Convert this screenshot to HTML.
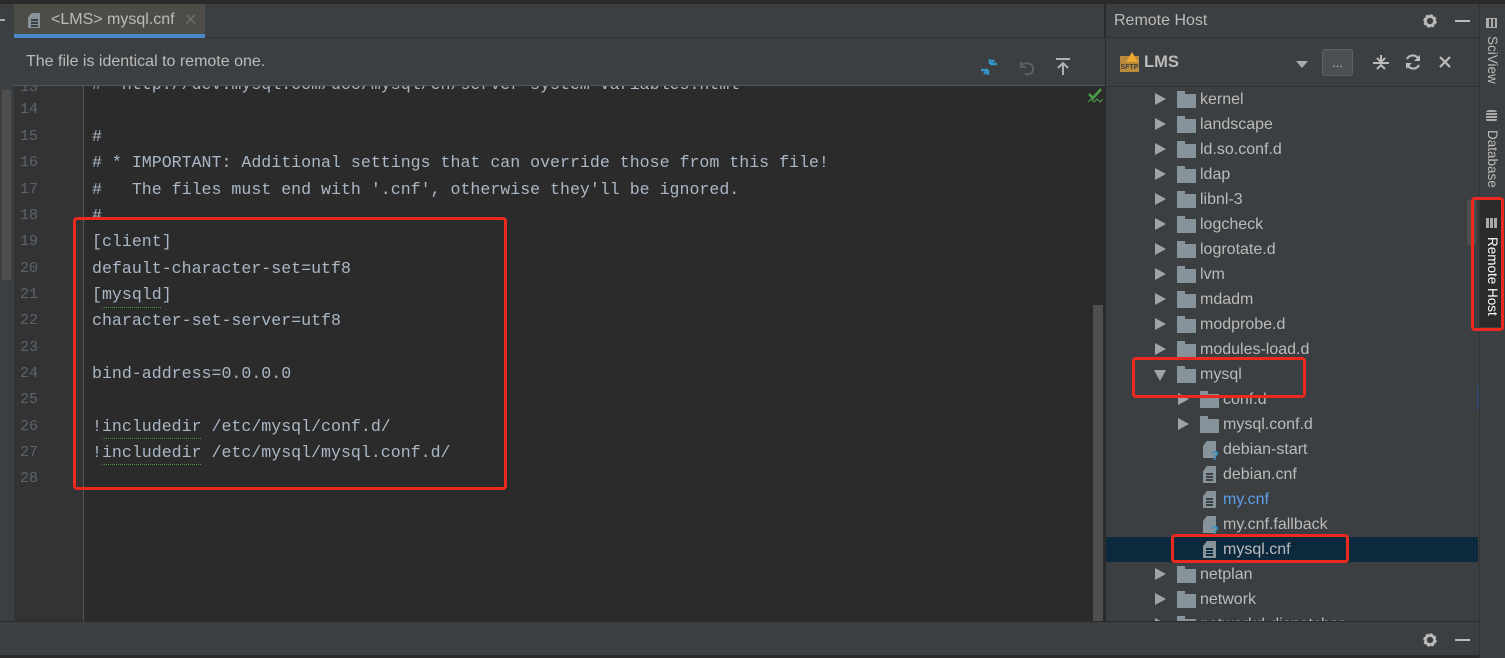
<!DOCTYPE html>
<html><head><meta charset="utf-8"><style>
*{margin:0;padding:0;box-sizing:border-box}
body{width:1505px;height:658px;overflow:hidden;background:#3c3f41;position:relative;font-family:"Liberation Sans",sans-serif;color:#bbbbbb}
.a{position:absolute}
.mono{font-family:"Liberation Mono",monospace;font-size:16.6px;color:#a9b7c6;white-space:pre}
.ln{font-family:"Liberation Mono",monospace;font-size:15px;color:#606366;position:absolute;left:20px;width:24px;text-align:left}
.row{position:absolute;font-size:16px;color:#bbbbbb;white-space:nowrap}
.red{position:absolute;border:3px solid #ea2a1f;border-radius:4px}
.arr{position:absolute;width:0;height:0;border-left:11px solid #a0a4a8;border-top:6.5px solid transparent;border-bottom:6.5px solid transparent}
.fold{position:absolute;width:19px;height:14px;background:#87939a}
.fold:before{content:"";position:absolute;left:0;top:-3px;width:8px;height:3px;background:#87939a}
.file{position:absolute;width:13px;height:17px;background:#87939a;clip-path:polygon(30% 0,100% 0,100% 100%,0 100%,0 30%)}
.file i{position:absolute;left:3px;height:1.5px;background:#3c3f41;width:7px}
.q{position:absolute;color:#3592c4;font-weight:bold;font-size:13px}
</style></head><body>
<div class="a" style="left:0;top:0;width:1505px;height:4px;background:#2b2b2b"></div>
<div class="a" style="left:0;top:4px;width:14px;height:618px;background:#3c3f41"></div>
<div class="a" style="left:0;top:19px;width:5px;height:2px;background:#aaa"></div>
<div class="a" style="left:2px;top:90px;width:9px;height:190px;background:#4e4e4e"></div>
<div class="a" style="left:14px;top:4px;width:1091px;height:34px;background:#3c3f41;border-bottom:1px solid #323232"></div>
<div class="a" style="left:14px;top:4px;width:191px;height:34px;background:#4e4c46"></div>
<div class="a" style="left:14px;top:34px;width:191px;height:4px;background:#4a88c7"></div>
<div class="file" style="left:28px;top:13px;width:12px;height:15px;"><i style="top:6px"></i><i style="top:9px"></i><i style="top:12px"></i></div>
<div class="a" style="left:51px;top:11px;font-size:16px;color:#bbbbbb">&lt;LMS&gt; mysql.cnf</div>
<div class="a" style="left:184px;top:10px;font-size:16px;color:#6d6d6d">✕</div>
<div class="a" style="left:14px;top:86px;width:1091px;height:536px;background:#2b2b2b"></div>
<div class="a" style="left:14px;top:86px;width:69px;height:536px;background:#313335"></div>
<div class="a" style="left:83px;top:86px;width:1px;height:536px;background:#555"></div>
<div class="a" style="left:1093px;top:305px;width:10px;height:316px;background:#4f4f4f"></div>
<div class="a" style="left:1104px;top:4px;width:2px;height:618px;background:#2b2b2b"></div>
<div class="ln" style="top:79px">13</div>
<div class="mono a" style="left:92px;top:75px">#  http://dev.mysql.com/doc/mysql/en/server-system-variables.html</div>
<div class="ln" style="top:101px">14</div>
<div class="ln" style="top:128px">15</div><div class="mono a" style="left:92px;top:127px">#</div>
<div class="ln" style="top:154px">16</div><div class="mono a" style="left:92px;top:153px"># * IMPORTANT: Additional settings that can override those from this file!</div>
<div class="ln" style="top:181px">17</div><div class="mono a" style="left:92px;top:180px">#   The files must end with '.cnf', otherwise they'll be ignored.</div>
<div class="ln" style="top:207px">18</div><div class="mono a" style="left:92px;top:206px">#</div>
<div class="ln" style="top:233px">19</div><div class="mono a" style="left:92px;top:232px">[client]</div>
<div class="ln" style="top:260px">20</div><div class="mono a" style="left:92px;top:259px">default-character-set=utf8</div>
<div class="ln" style="top:286px">21</div><div class="mono a" style="left:92px;top:285px">[mysqld]</div>
<div class="ln" style="top:312px">22</div><div class="mono a" style="left:92px;top:311px">character-set-server=utf8</div>
<div class="ln" style="top:339px">23</div>
<div class="ln" style="top:365px">24</div><div class="mono a" style="left:92px;top:364px">bind-address=0.0.0.0</div>
<div class="ln" style="top:391px">25</div>
<div class="ln" style="top:418px">26</div><div class="mono a" style="left:92px;top:417px">!includedir /etc/mysql/conf.d/</div>
<div class="ln" style="top:444px">27</div><div class="mono a" style="left:92px;top:443px">!includedir /etc/mysql/mysql.conf.d/</div>
<div class="ln" style="top:470px">28</div>
<div class="a" style="left:102px;top:307px;width:59px;border-bottom:1px dotted #5a8f4a"></div>
<div class="a" style="left:102px;top:438px;width:99px;border-bottom:1px dotted #5a8f4a"></div>
<div class="a" style="left:102px;top:464px;width:99px;border-bottom:1px dotted #5a8f4a"></div>
<div class="a" style="left:14px;top:38px;width:1091px;height:48px;background:#3c3f41;border-bottom:1px solid #555"></div>
<div class="a" style="left:26px;top:53px;font-size:16px;color:#bbbbbb">The file is identical to remote one.</div>
<svg class="a" style="left:978px;top:56px" width="22" height="22" viewBox="0 0 22 22"><path d="M12 8h7M12 8l4-4M12 8V3" stroke="#3592c4" stroke-width="2.5" fill="none"/><path d="M10 14H3M10 14l-4 4M10 14v5" stroke="#3592c4" stroke-width="2.5" fill="none"/></svg>
<svg class="a" style="left:1017px;top:57px" width="20" height="20" viewBox="0 0 20 20"><path d="M4 5v5h5M4 9c2-4 11-4 12 2s-5 7-8 6" stroke="#5e6060" stroke-width="2" fill="none"/></svg>
<svg class="a" style="left:1053px;top:57px" width="20" height="20" viewBox="0 0 20 20"><path d="M3 2h14M10 18V6M5 11l5-5 5 5" stroke="#aeb1b3" stroke-width="2" fill="none"/></svg>
<svg class="a" style="left:1087px;top:88px" width="17" height="16" viewBox="0 0 17 16"><path d="M2 6l4 4 8-9" stroke="#4a9e4a" stroke-width="2.5" fill="none"/><path d="M1 14l3-3 3 3 3-3 3 3 3-3" stroke="#4a9e4a" stroke-width="1" fill="none"/></svg>
<div class="a" style="left:1106px;top:4px;width:373px;height:618px;background:#3c3f41"></div>
<div class="a" style="left:1114px;top:12px;font-size:16px;color:#bbbbbb">Remote Host</div>
<svg class="a" style="left:1421px;top:12px" width="18" height="18" viewBox="0 0 18 18"><circle cx="9" cy="9" r="5" fill="none" stroke="#bbb" stroke-width="3.5" stroke-dasharray="2.6 1.3"/><circle cx="9" cy="9" r="4.5" fill="none" stroke="#bbb" stroke-width="2.5"/></svg>
<div class="a" style="left:1455px;top:20px;width:15px;height:2px;background:#bbb"></div>
<div class="a" style="left:1106px;top:37px;width:373px;height:1px;background:#323232"></div>
<div class="a" style="left:1120px;top:56px;width:19px;height:16px;background:#b78a3c;font-size:7px;color:#3c3f41;font-weight:bold;text-align:center;line-height:24px">SFTP</div>
<div class="a" style="left:1126px;top:52px;width:0;height:0;border-left:6px solid transparent;border-right:6px solid transparent;border-bottom:10px solid #f0a732"></div>
<div class="a" style="left:1144px;top:53px;font-size:16.5px;font-weight:bold;color:#bbbbbb">LMS</div>
<div class="a" style="left:1296px;top:61px;border-left:6px solid transparent;border-right:6px solid transparent;border-top:7px solid #aaa"></div>
<div class="a" style="left:1322px;top:49px;width:31px;height:27px;background:#4c5052;border:1px solid #5e6264;border-radius:3px;text-align:center;color:#bbb;font-size:13px;line-height:26px">...</div>
<svg class="a" style="left:1372px;top:53px" width="18" height="20" viewBox="0 0 18 20"><path d="M1 10h16M9 2v6M5 5l4 4 4-4M5 16l4-4 4 4" stroke="#bbb" stroke-width="2" fill="none"/></svg>
<svg class="a" style="left:1404px;top:53px" width="18" height="18" viewBox="0 0 18 18"><path d="M15 7A6.5 6.5 0 0 0 3 6M3 11a6.5 6.5 0 0 0 12 1" stroke="#bbb" stroke-width="2.2" fill="none"/><path d="M16 2v6h-6M2 16v-6h6" fill="#bbb"/></svg>
<svg class="a" style="left:1438px;top:55px" width="14" height="14" viewBox="0 0 14 14"><path d="M2 2l10 10M12 2L2 12" stroke="#bbb" stroke-width="2.2"/></svg>
<div class="a" style="left:1106px;top:86px;width:373px;height:1px;background:#323232"></div>
<div class="a" style="left:1467px;top:200px;width:9px;height:45px;background:#4f4f4f"></div>
<div class="a" style="left:1477px;top:385px;width:2px;height:25px;background:#2f4a66"></div>
<div class="a" style="left:1106px;top:537px;width:372px;height:25px;background:#0d293e"></div>
<div class="arr" style="left:1155px;top:93px"></div><div class="fold" style="left:1177px;top:94px"></div><div class="row" style="left:1200px;top:91px">kernel</div>
<div class="arr" style="left:1155px;top:118px"></div><div class="fold" style="left:1177px;top:119px"></div><div class="row" style="left:1200px;top:116px">landscape</div>
<div class="arr" style="left:1155px;top:143px"></div><div class="fold" style="left:1177px;top:144px"></div><div class="row" style="left:1200px;top:141px">ld.so.conf.d</div>
<div class="arr" style="left:1155px;top:168px"></div><div class="fold" style="left:1177px;top:169px"></div><div class="row" style="left:1200px;top:166px">ldap</div>
<div class="arr" style="left:1155px;top:193px"></div><div class="fold" style="left:1177px;top:194px"></div><div class="row" style="left:1200px;top:191px">libnl-3</div>
<div class="arr" style="left:1155px;top:218px"></div><div class="fold" style="left:1177px;top:219px"></div><div class="row" style="left:1200px;top:216px">logcheck</div>
<div class="arr" style="left:1155px;top:243px"></div><div class="fold" style="left:1177px;top:244px"></div><div class="row" style="left:1200px;top:241px">logrotate.d</div>
<div class="arr" style="left:1155px;top:268px"></div><div class="fold" style="left:1177px;top:269px"></div><div class="row" style="left:1200px;top:266px">lvm</div>
<div class="arr" style="left:1155px;top:293px"></div><div class="fold" style="left:1177px;top:294px"></div><div class="row" style="left:1200px;top:291px">mdadm</div>
<div class="arr" style="left:1155px;top:318px"></div><div class="fold" style="left:1177px;top:319px"></div><div class="row" style="left:1200px;top:316px">modprobe.d</div>
<div class="arr" style="left:1155px;top:343px"></div><div class="fold" style="left:1177px;top:344px"></div><div class="row" style="left:1200px;top:341px">modules-load.d</div>
<div class="a" style="left:1154px;top:370px;border-left:6.5px solid transparent;border-right:6.5px solid transparent;border-top:11px solid #a0a4a8"></div><div class="fold" style="left:1177px;top:369px"></div><div class="row" style="left:1200px;top:366px">mysql</div>
<div class="arr" style="left:1178px;top:393px"></div><div class="fold" style="left:1200px;top:394px"></div><div class="row" style="left:1223px;top:391px">conf.d</div>
<div class="arr" style="left:1178px;top:418px"></div><div class="fold" style="left:1200px;top:419px"></div><div class="row" style="left:1223px;top:416px">mysql.conf.d</div>
<div class="file" style="left:1203px;top:441px"></div><div class="q" style="left:1211px;top:448px">?</div><div class="row" style="left:1223px;top:441px">debian-start</div>
<div class="file" style="left:1203px;top:466px"><i style="top:7px"></i><i style="top:10px"></i><i style="top:13px"></i></div><div class="row" style="left:1223px;top:466px">debian.cnf</div>
<div class="file" style="left:1203px;top:491px"><i style="top:7px"></i><i style="top:10px"></i><i style="top:13px"></i></div><div class="row" style="left:1223px;top:491px;color:#5a9ee8">my.cnf</div>
<div class="file" style="left:1203px;top:516px"></div><div class="q" style="left:1211px;top:523px">?</div><div class="row" style="left:1223px;top:516px">my.cnf.fallback</div>
<div class="file" style="left:1203px;top:541px"><i style="top:7px;background:#0d293e"></i><i style="top:10px;background:#0d293e"></i><i style="top:13px;background:#0d293e"></i></div><div class="row" style="left:1223px;top:541px">mysql.cnf</div>
<div class="arr" style="left:1155px;top:568px"></div><div class="fold" style="left:1177px;top:569px"></div><div class="row" style="left:1200px;top:566px">netplan</div>
<div class="arr" style="left:1155px;top:593px"></div><div class="fold" style="left:1177px;top:594px"></div><div class="row" style="left:1200px;top:591px">network</div>
<div class="arr" style="left:1155px;top:618px"></div><div class="fold" style="left:1177px;top:619px"></div><div class="row" style="left:1200px;top:616px">networkd-dispatcher</div>
<div class="a" style="left:1479px;top:4px;width:26px;height:654px;background:#3c3f41;border-left:1px solid #323232"></div>
<div class="a" style="left:1480px;top:200px;width:24px;height:127px;background:#2b2b2b"></div>
<div class="a" style="left:1486px;top:18px;width:11px;height:10px;border:1px solid #aaa;background:repeating-linear-gradient(90deg,#aaa 0 2px,transparent 2px 4px)"></div>
<div class="a" style="left:1500px;top:36px;transform-origin:0 0;transform:rotate(90deg);font-size:13.5px;color:#bbb;white-space:nowrap">SciView</div>
<div class="a" style="left:1486px;top:110px;width:11px;height:12px;border-radius:3px;background:repeating-linear-gradient(180deg,#aaa 0 2px,transparent 2px 3px)"></div>
<div class="a" style="left:1500px;top:130px;transform-origin:0 0;transform:rotate(90deg);font-size:13.5px;color:#bbb;white-space:nowrap">Database</div>
<div class="a" style="left:1486px;top:218px;width:12px;height:10px;background:repeating-linear-gradient(90deg,#aaa 0 3px,transparent 3px 4px)"></div>
<div class="a" style="left:1500px;top:237px;transform-origin:0 0;transform:rotate(90deg);font-size:13.5px;color:#fff;white-space:nowrap">Remote Host</div>
<div class="a" style="left:0;top:621px;width:1479px;height:37px;background:#3c3f41;border-top:1px solid #2b2b2b"></div>
<div class="a" style="left:0;top:655px;width:1479px;height:3px;background:#2b2b2b"></div>
<svg class="a" style="left:1421px;top:631px" width="18" height="18" viewBox="0 0 18 18"><circle cx="9" cy="9" r="5" fill="none" stroke="#bbb" stroke-width="3.5" stroke-dasharray="2.6 1.3"/><circle cx="9" cy="9" r="4.5" fill="none" stroke="#bbb" stroke-width="2.5"/></svg>
<div class="a" style="left:1455px;top:639px;width:15px;height:2px;background:#bbb"></div>
<div class="red" style="left:73px;top:217px;width:434px;height:273px"></div>
<div class="red" style="left:1132px;top:357px;width:174px;height:41px"></div>
<div class="red" style="left:1171px;top:534px;width:178px;height:29px"></div>
<div class="red" style="left:1471px;top:197px;width:33px;height:134px"></div>
</body></html>
